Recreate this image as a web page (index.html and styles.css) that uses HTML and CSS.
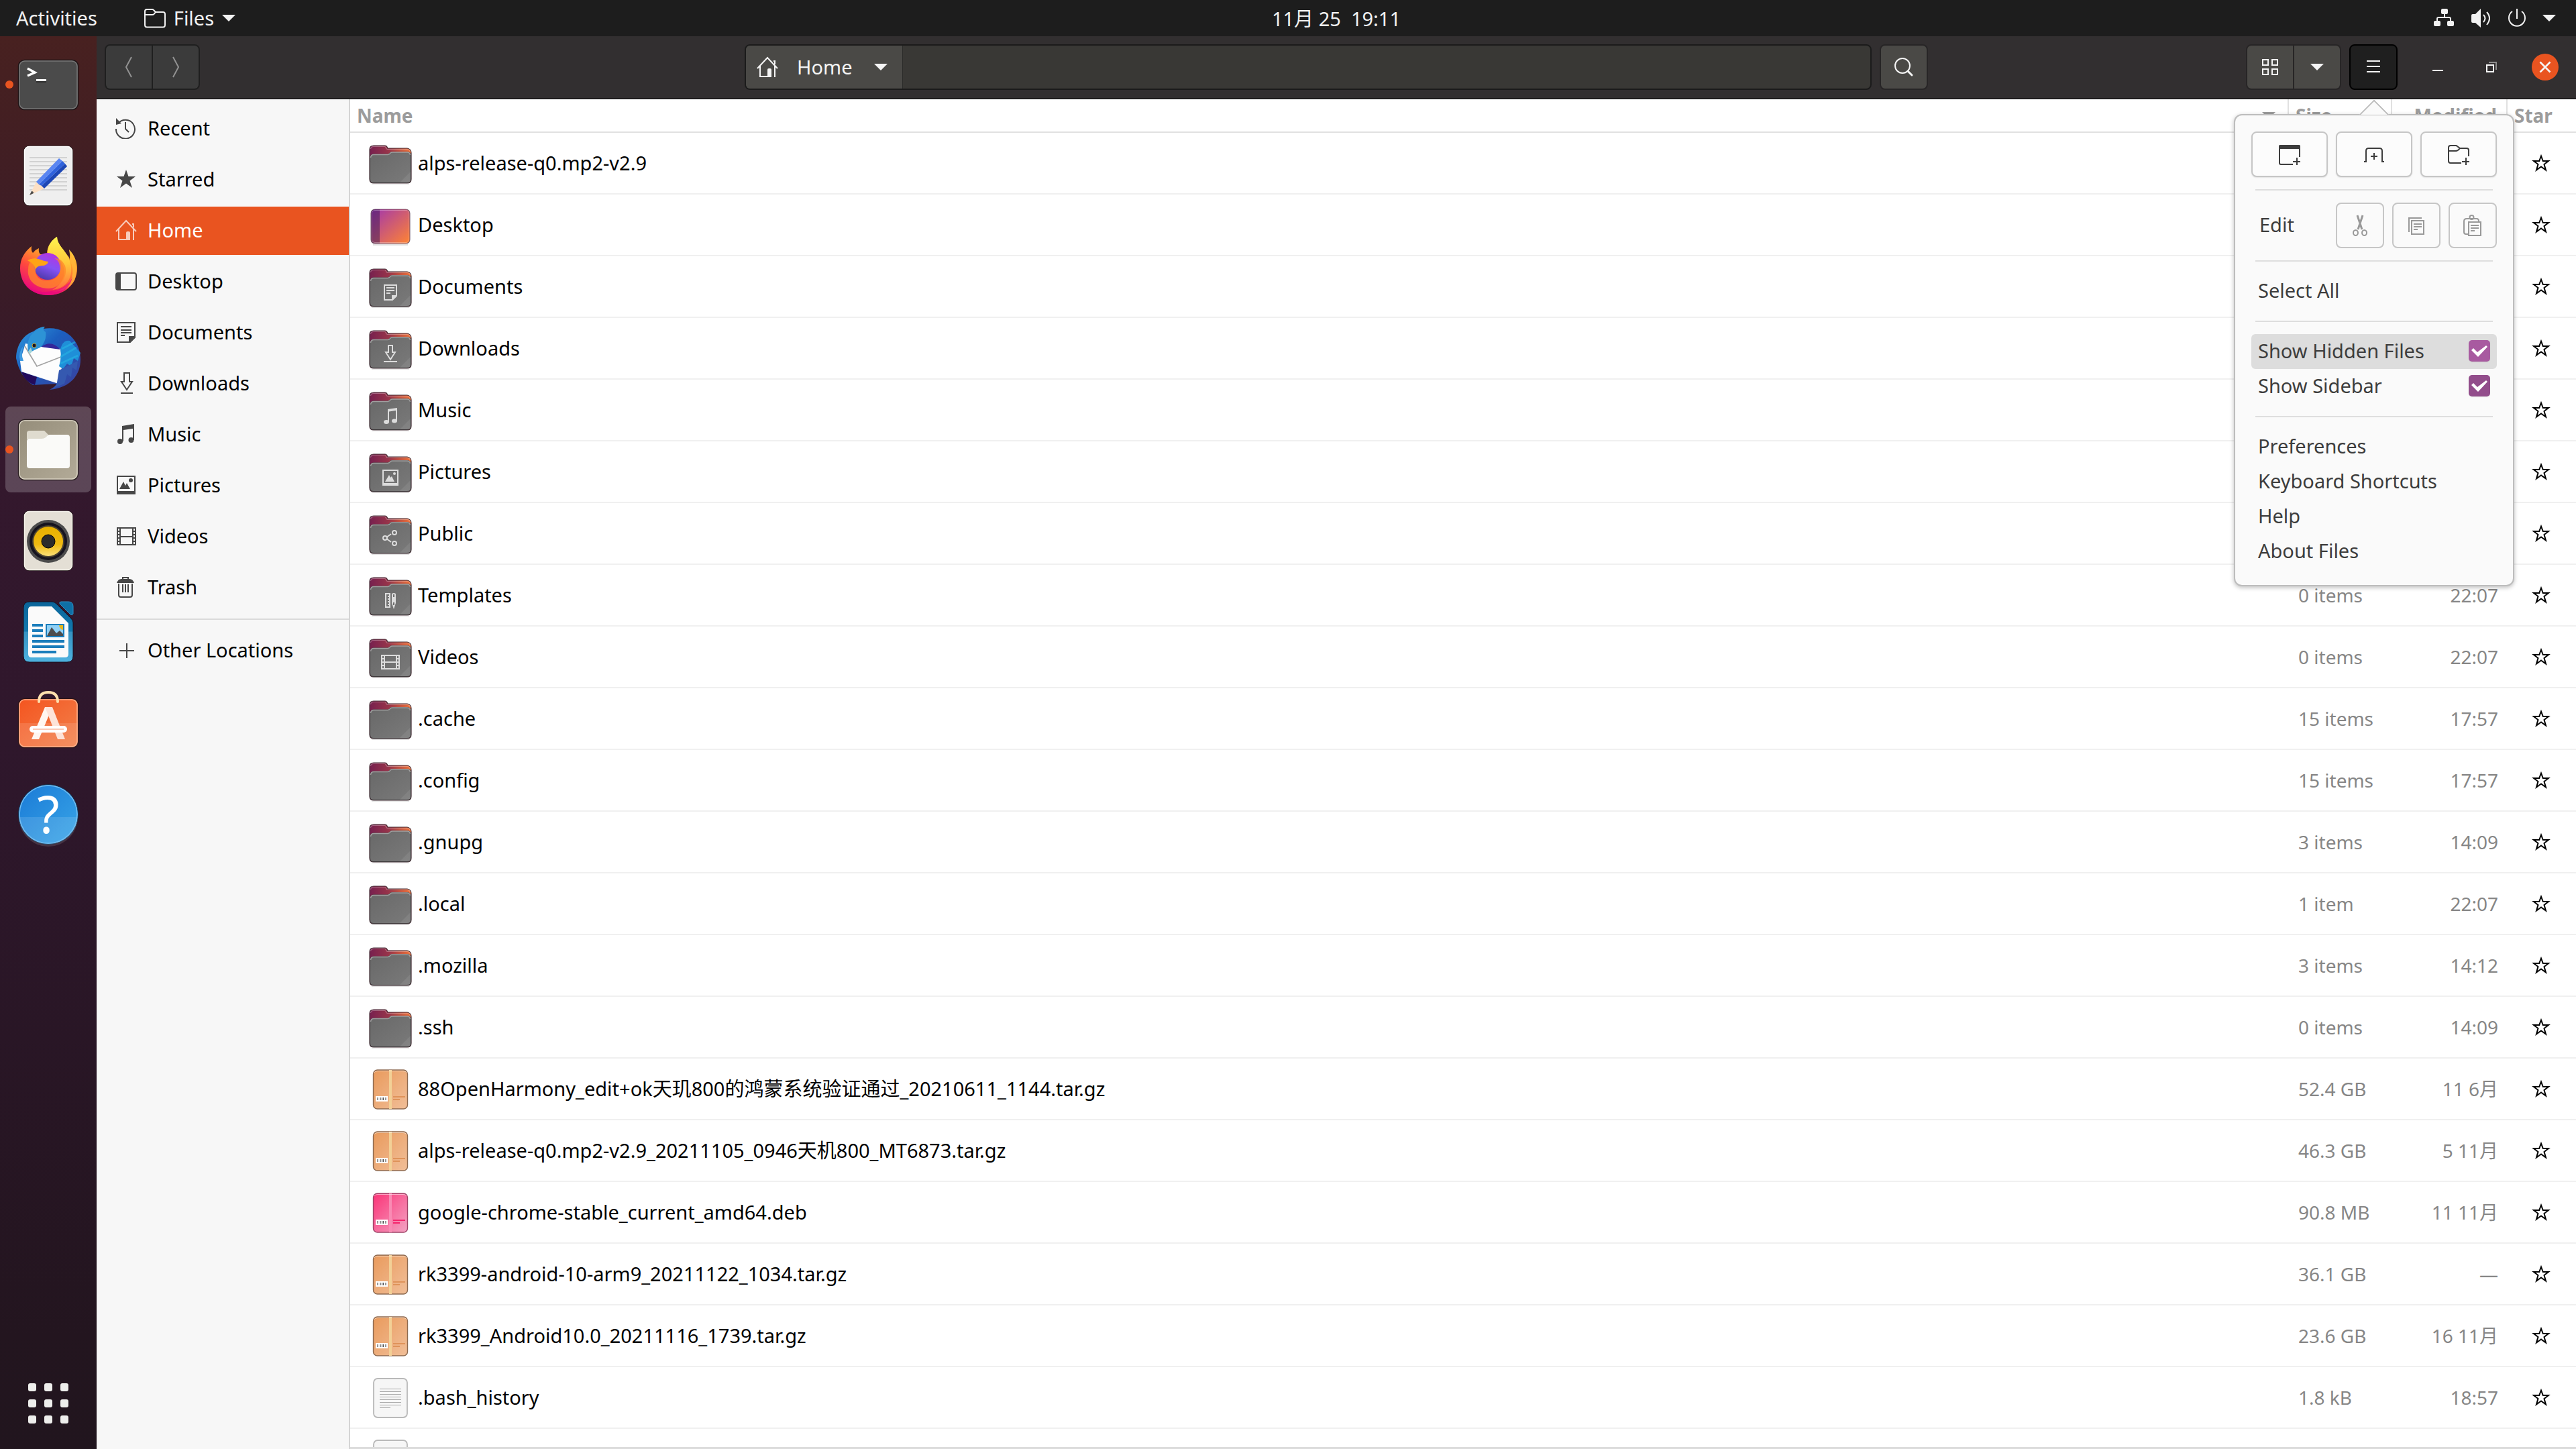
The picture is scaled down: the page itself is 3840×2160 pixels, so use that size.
FILE: index.html
```
<!DOCTYPE html>
<html lang="en">
<head>
    <meta charset="UTF-8">
    <meta name="viewport" content="width=device-width, initial-scale=1.0">
    <title>Home</title>
    <link rel="stylesheet" href="styles.css">
</head>
<body>
    <svg class="sprite" aria-hidden="true">
        <defs>
            <linearGradient id="g-back" x1="0" y1="0" x2="1" y2="0">
                <stop offset="0" stop-color="#77204f"/><stop offset=".45" stop-color="#97344a"/><stop offset="1" stop-color="#f0743a"/>
            </linearGradient>
            <linearGradient id="g-front" x1="0" y1="0" x2="1" y2="1">
                <stop offset="0" stop-color="#686868"/><stop offset="1" stop-color="#7a7a7a"/>
            </linearGradient>
            <linearGradient id="g-desk" x1="0" y1="0" x2="1" y2="1">
                <stop offset="0" stop-color="#a035b0"/><stop offset="1" stop-color="#ff8432"/>
            </linearGradient>
            <linearGradient id="g-pkg" x1="0" y1="0" x2="1" y2="1">
                <stop offset="0" stop-color="#e99a5c"/><stop offset="1" stop-color="#f1bf99"/>
            </linearGradient>
            <linearGradient id="g-deb" x1="0" y1="0" x2="1" y2="1">
                <stop offset="0" stop-color="#fb3377"/><stop offset="1" stop-color="#f3a3c3"/>
            </linearGradient>
            <linearGradient id="g-fox" x1=".8" y1="0" x2=".3" y2="1">
                <stop offset="0" stop-color="#fff44f"/><stop offset=".35" stop-color="#ffa32b"/><stop offset=".65" stop-color="#ff4a3d"/><stop offset="1" stop-color="#e8067f"/>
            </linearGradient>
            <linearGradient id="g-fin" x1="0" y1="0" x2="0" y2="1">
                <stop offset="0" stop-color="#fff44f"/><stop offset=".5" stop-color="#ffc83a"/><stop offset="1" stop-color="#ff6f3d"/>
            </linearGradient>
            <linearGradient id="g-globe" x1=".7" y1="0" x2=".3" y2="1">
                <stop offset="0" stop-color="#b832e0"/><stop offset=".5" stop-color="#8552f5"/><stop offset="1" stop-color="#4b39a8"/>
            </linearGradient>
            <linearGradient id="g-bird" x1="0" y1="0" x2="1" y2="1">
                <stop offset="0" stop-color="#2f9ee0"/><stop offset=".4" stop-color="#1c5fbf"/><stop offset="1" stop-color="#3b3f9c"/>
            </linearGradient>
            <linearGradient id="g-shop" x1="0" y1="0" x2="1" y2="1">
                <stop offset="0" stop-color="#f4541f"/><stop offset="1" stop-color="#f2824c"/>
            </linearGradient>
            <linearGradient id="g-help" x1="0" y1="0" x2="1" y2="1">
                <stop offset="0" stop-color="#1a7ad6"/><stop offset="1" stop-color="#39a6e8"/>
            </linearGradient>
            <linearGradient id="g-nautilus" x1="0" y1="0" x2="1" y2="1">
                <stop offset="0" stop-color="#958d7a"/><stop offset="1" stop-color="#b3ab98"/>
            </linearGradient>
            <linearGradient id="g-cone" x1="0" y1="0" x2="0" y2="1">
                <stop offset="0" stop-color="#e8b000"/><stop offset=".6" stop-color="#efba10"/><stop offset="1" stop-color="#fbe078"/>
            </linearGradient>
            <linearGradient id="g-writer" x1="0" y1="0" x2="0" y2="1">
                <stop offset="0" stop-color="#0a6499"/><stop offset=".49" stop-color="#1279ae"/><stop offset=".5" stop-color="#3592c2"/><stop offset="1" stop-color="#4fb3e0"/>
            </linearGradient>
        </defs>

        <!-- symbolic icons, 16px grid doubled -->
        <symbol id="i-folder" viewBox="0 0 32 32"><path d="M1 26V6Q1 3 4 3H12Q13.500 3 14.500 4.500L17 7H28Q31 7 31 10V26Q31 29.500 28 29.500H4Q1 29.500 1 26ZM1 11H12Q14 11 15 9.500L17 7" fill="none" stroke="currentColor" stroke-width="2"/></symbol>
        <symbol id="i-caret" viewBox="0 0 20 10"><path d="M0 0H20L10 10Z" fill="currentColor"/></symbol>
        <symbol id="i-network" viewBox="0 0 32 32"><path d="M13 2h6q2 0 2 2v4q0 2-2 2h-6q-2 0-2-2V4q0-2 2-2zM2 20h6q2 0 2 2v4q0 2-2 2H2q-2 0-2-2v-4q0-2 2-2zM22 20h6q2 0 2 2v4q0 2-2 2h-6q-2 0-2-2v-4q0-2 2-2z" fill="currentColor"/><path d="M16 9v6M5 21v-4q0-2 2-2h16q2 0 2 2v4" fill="none" stroke="currentColor" stroke-width="2"/></symbol>
        <symbol id="i-volume" viewBox="0 0 32 32"><path d="M4 10h4l8-8v28l-8-7H4q-2 0-2-2v-9q0-2 2-2z" fill="currentColor"/><path d="M20 11q5 5 0 11M25 7q8 9 0 19" fill="none" stroke="currentColor" stroke-width="2"/></symbol>
        <symbol id="i-power" viewBox="0 0 32 32"><path d="M16 2v15M9 6A12 12 0 1 0 23 6" fill="none" stroke="currentColor" stroke-width="2"/></symbol>
        <symbol id="i-prev" viewBox="0 0 32 32"><path d="M20 1L12 16L20 31" fill="none" stroke="currentColor" stroke-width="2"/></symbol>
        <symbol id="i-next" viewBox="0 0 32 32"><path d="M12 1L20 16L12 31" fill="none" stroke="currentColor" stroke-width="2"/></symbol>
        <symbol id="i-home" viewBox="0 0 32 32"><path d="M1 18L16 2L31 18M5 14V30H22M27 14V31M25 7h2v5" fill="none" stroke="currentColor" stroke-width="2"/><path d="M16 31V20q0-2 2-2h2q2 0 2 2v11z" fill="currentColor"/></symbol>
        <symbol id="i-search" viewBox="0 0 32 32"><circle cx="14" cy="14" r="11" fill="none" stroke="currentColor" stroke-width="2"/><path d="M22 22L28 28" stroke="currentColor" stroke-width="3" stroke-linecap="round"/></symbol>
        <symbol id="i-grid" viewBox="0 0 32 32"><path d="M5 5h8v8H5zM19 5h8v8h-8zM5 19h8v8H5zM19 19h8v8h-8z" fill="none" stroke="currentColor" stroke-width="2"/></symbol>
        <symbol id="i-menu" viewBox="0 0 32 32"><path d="M6 7H26M6 15H26M6 23H26" stroke="currentColor" stroke-width="2"/></symbol>
        <symbol id="i-min" viewBox="0 0 32 32"><path d="M8 21H24" stroke="currentColor" stroke-width="2"/></symbol>
        <symbol id="i-max" viewBox="0 0 32 32"><path d="M9 13H19V23H9Z" fill="none" stroke="currentColor" stroke-width="2"/><path d="M12 9H23V20" fill="none" stroke="#8d8c8c" stroke-width="2"/></symbol>
        <symbol id="i-close" viewBox="0 0 32 32"><path d="M8.500 8.500L23.500 23.500M23.500 8.500L8.500 23.500" stroke="currentColor" stroke-width="2.600"/></symbol>
        <symbol id="i-recent" viewBox="0 0 32 32"><path d="M4 9A14 14 0 1 1 1 17" fill="none" stroke="currentColor" stroke-width="2"/><path d="M1 1V11L9 9Z" fill="currentColor"/><path d="M15 7V17L20 22" fill="none" stroke="currentColor" stroke-width="2"/></symbol>
        <symbol id="i-starred" viewBox="0 0 32 32"><path d="M16 2L19.500 12H30L21.500 18.500L25 29L16 22.500L7 29L10.500 18.500L2 12H12.500Z" fill="currentColor"/></symbol>
        <symbol id="i-desktop" viewBox="0 0 32 32"><rect x="1" y="4" width="30" height="25" rx="3" fill="none" stroke="currentColor" stroke-width="2"/><path d="M1 6q0-2 2-2h5v25H3q-2 0-2-2z" fill="currentColor"/></symbol>
        <symbol id="i-documents" viewBox="0 0 32 32"><path d="M3 2H29V24L22 31H3Z" fill="none" stroke="currentColor" stroke-width="2"/><path d="M20 22H30L20 32ZM8 7H24V9H8ZM8 12H24V14H8ZM8 16H24V18H8ZM8 20H14V22H8Z" fill="currentColor"/></symbol>
        <symbol id="i-downloads" viewBox="0 0 32 32"><path d="M13 1H21V14H25L17 26L9 14H13ZM8 31H26" fill="none" stroke="currentColor" stroke-width="2"/></symbol>
        <symbol id="i-music" viewBox="0 0 32 32"><path d="M10 4L28 1V25H26V8L12 10V27H10Z" fill="currentColor"/><ellipse cx="7" cy="27" rx="4" ry="4" fill="currentColor"/><ellipse cx="23.500" cy="25" rx="4" ry="4" fill="currentColor"/></symbol>
        <symbol id="i-pictures" viewBox="0 0 32 32"><path d="M3 3H29V29H3Z" fill="none" stroke="currentColor" stroke-width="2"/><path d="M3 25H29V30H3ZM6 22L12 11L15 17L17 13L22 22Z" fill="currentColor"/><circle cx="23" cy="9" r="3" fill="currentColor"/></symbol>
        <symbol id="i-videos" viewBox="0 0 32 32"><path d="M7 4H26V29H7ZM7 17H26" fill="none" stroke="currentColor" stroke-width="2"/><path d="M3 3V30M30 3V30" fill="none" stroke="currentColor" stroke-width="2"/><path d="M5 3V30M28 3V30" fill="none" stroke="currentColor" stroke-width="4" stroke-dasharray="2 3"/></symbol>
        <symbol id="i-trash" viewBox="0 0 32 32"><path d="M11 5V2H19V5M5 11V28Q5 31 8 31H22Q25 31 25 28V11M11 12V24M15 12V24M19 12V24" fill="none" stroke="currentColor" stroke-width="2"/><path d="M2 10Q4 4 9 4H21Q26 4 28 10Z" fill="currentColor"/></symbol>
        <symbol id="i-plus" viewBox="0 0 32 32"><path d="M17 6V28M6 17H28" stroke="currentColor" stroke-width="2"/></symbol>
        <symbol id="i-star" viewBox="0 0 32 32"><path d="M15 5.500L17.800 13H26L19.500 18L22 26.500L15 21.500L8 26.500L10.500 18L4 13H12.200Z" fill="none" stroke="currentColor" stroke-width="2"/></symbol>
        <symbol id="i-newwin" viewBox="0 0 32 32"><path d="M31 20V5Q31 3 29 3H3Q1 3 1 5V29Q1 31 3 31H21" fill="none" stroke="currentColor" stroke-width="2"/><path d="M0 8V4Q0 2 2 2H30Q32 2 32 4V8ZM26 21h2v5h4v2h-4v4h-2v-4h-5v-2h5z" fill="currentColor"/></symbol>
        <symbol id="i-newtab" viewBox="0 0 32 32"><path d="M1 27H4V11Q4 7 8 7H24Q28 7 28 11V27H31M16 14V24M11 19H21" fill="none" stroke="currentColor" stroke-width="2"/></symbol>
        <symbol id="i-newfolder" viewBox="0 0 32 32"><path d="M31 19V10Q31 7 28 7H18L14 4Q13 3 12 3H4Q1 3 1 6V26Q1 29 4 29H20M1 11H12Q15 11 18 7" fill="none" stroke="currentColor" stroke-width="2"/><path d="M26 21h2v5h4v2h-4v4h-2v-4h-5v-2h5z" fill="currentColor"/></symbol>
        <symbol id="i-cut" viewBox="0 0 32 32"><path d="M12 1L19 22M20 1L13 22" stroke="currentColor" stroke-width="3"/><ellipse cx="9.500" cy="27" rx="3.500" ry="4" fill="none" stroke="currentColor" stroke-width="2"/><ellipse cx="22.500" cy="27" rx="3.500" ry="4" fill="none" stroke="currentColor" stroke-width="2"/></symbol>
        <symbol id="i-copy" viewBox="0 0 32 32"><path d="M5 26V5H24M9 9H27V29H9ZM12 14H24M12 18H24M12 22H18" fill="none" stroke="currentColor" stroke-width="2"/></symbol>
        <symbol id="i-paste" viewBox="0 0 32 32"><path d="M9 29H6Q3 29 3 26V10Q3 6 7 6H22Q25 6 25 10M10 11H28V31H10ZM13 16H25M13 20H25M13 24H19" fill="none" stroke="currentColor" stroke-width="2"/><circle cx="14.500" cy="4" r="3" fill="none" stroke="currentColor" stroke-width="2"/></symbol>

        <!-- file icons -->
        <symbol id="f-folder" viewBox="0 0 64 64">
            <path d="M4 64H60" stroke="#000" stroke-opacity=".12" stroke-width="2"/>
            <path d="M1 12Q1 6 7 6H24Q26 6 27 8L28 10H57Q63 11 63 17V56Q63 62 57 62H7Q1 62 1 56Z" fill="url(#g-back)" stroke="#473038" stroke-width="1.200"/>
            <path d="M2.500 11Q3 7.500 7 7.500H24L27 11.500H57Q61 12 61.500 15" fill="none" stroke="#fff" stroke-opacity=".3" stroke-width="1.200"/>
            <path d="M1.500 25Q1.500 19 7 19H27Q30 19 31 17Q32 15.500 34 15.500H57Q62.500 15.500 62.500 21V56Q62.500 61.500 57 61.500H7Q1.500 61.500 1.500 56Z" fill="url(#g-front)" stroke="#3f3a3c" stroke-width="1"/>
            <path d="M2.500 24Q3 19.500 7 19.500H28Q31 19 32 17Q33 16 35 16H57Q61 16 61.500 20" fill="none" stroke="#a0a0a0" stroke-width="1.600"/>
            <path d="M46 61L62 45V56Q62 61 57 61Z" fill="#fff" fill-opacity=".08"/>
        </symbol>
        <symbol id="e-documents" viewBox="0 0 64 64"><path d="M23 30H41V46L35 52H23Z" fill="none" stroke="#dcdcdc" stroke-width="2"/><path d="M34 45H42L34 53ZM26 33H38V35H26ZM26 37H38V39H26ZM26 41H32V43H26Z" fill="#dcdcdc"/></symbol>
        <symbol id="e-downloads" viewBox="0 0 64 64"><path d="M29 28H35V38H39L32 49L25 38H29ZM22 52H42" fill="none" stroke="#dcdcdc" stroke-width="2"/></symbol>
        <symbol id="e-music" viewBox="0 0 64 64"><path d="M28 31L42 29V49H40V33L30 34.500V50H28Z" fill="#dcdcdc"/><ellipse cx="26" cy="50" rx="4" ry="3" fill="#dcdcdc"/><ellipse cx="38" cy="48.500" rx="4" ry="3" fill="#dcdcdc"/></symbol>
        <symbol id="e-pictures" viewBox="0 0 64 64"><path d="M21 30H43V52H21Z" fill="none" stroke="#dcdcdc" stroke-width="2"/><path d="M21 49H43V52H21ZM24 47L30 37L32 41L34 39L38 47Z" fill="#dcdcdc"/><circle cx="38" cy="35" r="2" fill="#dcdcdc"/></symbol>
        <symbol id="e-public" viewBox="0 0 64 64"><g fill="none" stroke="#dcdcdc" stroke-width="2"><circle cx="24" cy="39" r="3"/><circle cx="38" cy="31" r="3"/><circle cx="38" cy="47" r="3"/><path d="M26 38L33 33M26 40L33 45"/></g></symbol>
        <symbol id="e-templates" viewBox="0 0 64 64"><path d="M25 30H31V50H25ZM28 34H31M28 38H31M28 42H31M28 46H31" fill="none" stroke="#dcdcdc" stroke-width="2"/><path d="M34 31Q34 29 37 29Q40 29 40 31V44L37 53L34 44Z" fill="#dcdcdc"/><path d="M36 31h2v4h-2zM36 43h2v4h-2z" fill="#6e6e6e"/></symbol>
        <symbol id="e-videos" viewBox="0 0 64 64"><path d="M23 30H41V50H23ZM23 40H41M19 29V51M45 29V51" fill="none" stroke="#dcdcdc" stroke-width="2"/><path d="M21 29V51M43 29V51" fill="none" stroke="#dcdcdc" stroke-width="4" stroke-dasharray="2 3"/></symbol>
        <symbol id="f-desktop" viewBox="0 0 64 64">
            <path d="M6 62H58" stroke="#000" stroke-opacity=".12" stroke-width="2"/>
            <rect x="3" y="9" width="58" height="51" rx="6" fill="url(#g-desk)"/>
            <path d="M3 15Q3 9 9 9H16V60H9Q3 60 3 54Z" fill="#2a1650" fill-opacity=".45"/>
            <rect x="4" y="10.500" width="56" height="48" rx="5" fill="none" stroke="#fff" stroke-opacity=".3"/>
            <rect x="3" y="9" width="58" height="51" rx="6" fill="none" stroke="#5a3a50" stroke-opacity=".7" stroke-width="1.200"/>
        </symbol>
        <symbol id="f-tar" viewBox="0 0 64 64">
            <rect x="6.500" y="4" width="51" height="58" rx="6" fill="url(#g-pkg)" stroke="#8d6a50" stroke-width="1.400"/>
            <path d="M30 4h4v58h-4z" fill="#f2d096"/>
            <path d="M8 8Q9 5.500 13 5.500H51Q55 5.500 56 8" fill="none" stroke="#fff" stroke-opacity=".5"/>
            <path d="M10 43h18v8H10z" fill="#fff"/><path d="M13 45v4M17 45v4M19.500 45v4M21.500 45v4M25 45v4" stroke="#555" stroke-width="1.200"/>
            <path d="M36 44H54M36 48H46" stroke="#df935a" stroke-width="2"/>
        </symbol>
        <symbol id="f-deb" viewBox="0 0 64 64">
            <rect x="6.500" y="4" width="51" height="58" rx="6" fill="url(#g-deb)" stroke="#a04468" stroke-width="1.400"/>
            <path d="M30 4h4v58h-4z" fill="#f98bb4"/>
            <path d="M8 8Q9 5.500 13 5.500H51Q55 5.500 56 8" fill="none" stroke="#fff" stroke-opacity=".5"/>
            <path d="M10 43h18v8H10z" fill="#fff"/><path d="M13 45v4M17 45v4M19.500 45v4M21.500 45v4M25 45v4" stroke="#555" stroke-width="1.200"/>
            <path d="M36 44H54M36 48H46" stroke="#f5246c" stroke-width="2"/>
        </symbol>
        <symbol id="f-text" viewBox="0 0 64 64">
            <rect x="7" y="4" width="50" height="58" rx="6" fill="#f6f6f6" stroke="#b9b9b9" stroke-width="1.800"/>
            <path d="M16 19.500H48M16 23.500H48M16 27.500H48M16 31.500H48M16 35.500H48M16 39.500H48M16 43.500H48M16 47.500H32" stroke="#a9a9a9" stroke-width="1"/>
        </symbol>
    </svg>

    <header class="topbar">
        <div class="topbar-left">
            <button class="topbar-btn">Activities</button>
            <button class="topbar-btn app-menu">
                <svg class="icon"><use href="#i-folder"/></svg>
                Files
                <svg class="caret"><use href="#i-caret"/></svg>
            </button>
        </div>
        <button class="topbar-btn clock">11月 25&nbsp; 19:11</button>
        <button class="topbar-btn status" aria-label="System">
            <svg class="icon"><use href="#i-network"/></svg>
            <svg class="icon"><use href="#i-volume"/></svg>
            <svg class="icon"><use href="#i-power"/></svg>
            <svg class="caret"><use href="#i-caret"/></svg>
        </button>
    </header>

    <div class="desktop">
        <nav class="dock">
            <a class="dock-item running" href="#" aria-label="Terminal">
                <svg class="app-icon" viewBox="0 0 96 96">
                    <rect x="3.500" y="11.500" width="89" height="74" rx="9" fill="#4b4b4b" stroke="#1f1416" stroke-width="1.500"/>
                    <rect x="5" y="13" width="86" height="71" rx="8" fill="none" stroke="#777" stroke-width="1.500"/>
                    <path d="M17 24L28 30L17 35" fill="none" stroke="#fff" stroke-width="3.500"/>
                    <path d="M30 43.500H45" stroke="#2c2c2c" stroke-width="3"/><path d="M30 41.500H45" stroke="#fff" stroke-width="3"/>
                </svg>
            </a>
            <a class="dock-item" href="#" aria-label="Text Editor">
                <svg class="app-icon" viewBox="0 0 96 96">
                    <rect x="11.500" y="3.500" width="73" height="89" rx="8" fill="#efefef" stroke="#1f1416" stroke-width="1.200"/>
                    <rect x="12.500" y="4.500" width="71" height="87" rx="7" fill="none" stroke="#fff" stroke-width="1.500"/>
                    <path d="M20 21H76M20 27H76M20 33H76M20 39H76M20 45H76M20 51H76M20 57H76M20 63H76M20 69H76" stroke="#d2d2d2" stroke-width="2"/>
                    <path d="M30 57L20 77L42 67L40 60Z" fill="#fde0c4"/><path d="M23 71L20 77L26 74Q26 71 23 71Z" fill="#4a4a4a"/>
                    <path d="M30 57L64 22L69 26L34 61Z" fill="#5a86f2"/><path d="M34 61L69 26L73 30L38 63Z" fill="#2f62dd"/><path d="M38 63L73 30L76 34L42 67Z" fill="#1d47b5"/>
                </svg>
            </a>
            <a class="dock-item" href="#" aria-label="Firefox">
                <svg class="app-icon" viewBox="0 0 96 96">
                    <path d="M6 50C6 36 12 26 23 17Q22 24 25 27Q29 22 34 20Q33 26 36 29H46C46 16 54 7 61 3C61 14 70 20 76 30Q80 34 80 38Q81 30 79 22C88 31 91 42 91 50C91 74 72 90 48 90S6 74 6 50Z" fill="url(#g-fox)"/>
                    <path d="M47 29C46 16 54 7 61 3C61 14 72 22 78 34C88 56 80 80 54 82C66 76 76 62 70 46C66 36 60 31 47 29Z" fill="url(#g-fin)"/>
                    <path d="M80 38Q87 50 83 64Q76 82 54 85Q78 84 87 68Q93 52 86 38Q83 29 79 22Q82 30 80 38Z" fill="#ffb53a" fill-opacity=".8"/>
                    <circle cx="47" cy="47" r="20" fill="url(#g-globe)"/>
                    <path d="M17 38Q26 33 36 37Q43 40 48 40Q46 46 38 46Q30 46 29 52C28 60 34 68 44 68C60 69 68 58 65 46Q64 38 57 35Q68 35 73 46C78 62 66 80 48 80C28 80 16 66 18 52Q18 44 21 41Z" fill="#ff8a2a" fill-opacity=".75"/>
                    <path d="M17 38Q26 33 36 37Q43 40 48 40Q46 46 38 46Q32 46 29 51Q27 43 17 38Z" fill="#ffa416"/>
                    <path d="M8 62C14 82 34 88 52 84C72 82 82 70 84 62C82 78 68 90 48 90C26 90 12 78 8 62Z" fill="#e8067f" fill-opacity=".75"/>
                </svg>
            </a>
            <a class="dock-item" href="#" aria-label="Thunderbird">
                <svg class="app-icon" viewBox="0 0 96 96">
                    <path d="M0 48C0 28 12 12 26 8Q32 2 43 1Q40 3 41 4C72 -1 96 20 96 50C96 72 82 92 50 95Q58 92 61 86L25 88Q6 76 0 48Z" fill="url(#g-bird)"/>
                    <path d="M8 68L31 76L28 88Q12 82 8 68Z" fill="#230a5a"/>
                    <path d="M14 26L6 52L8 68L63 86Q72 60 66 34L38 31Z" fill="#fdfdfd"/>
                    <path d="M13 30L31 60L67 46" fill="none" stroke="#a3a3a3" stroke-width="1.800"/>
                    <path d="M38 31Q52 20 66 35L44 32Z" fill="#35279a"/>
                    <path d="M18 38Q14 18 28 8Q36 1 43 1Q38 6 44 9Q46 22 36 32Q26 36 20 40Z" fill="#2d93d6"/>
                    <path d="M18 38L22 32L24 38L20 42Z" fill="#a6d5d8"/>
                    <path d="M66 34Q70 20 80 22L96 40L92 52L86 48L82 60L76 56L70 64L64 60Q68 48 66 34Z" fill="#1f8fd8"/>
                    <path d="M68 34L88 24M66 46L90 32M66 56L92 44" stroke="#27b4e4" stroke-width="3" stroke-opacity=".6"/>
                    <path d="M64 66L92 52L90 66L84 62L82 76L76 72L72 86L50 95Q60 90 61 84Z" fill="#3559b0"/>
                    <path d="M6 52Q2 40 12 28Q6 40 11 52Z" fill="#3f9be0"/>
                    <circle cx="27" cy="29" r="3" fill="#14142a" stroke="#c59a20" stroke-width="1"/>
                </svg>
            </a>
            <a class="dock-item running active" href="#" aria-label="Files">
                <svg class="app-icon" viewBox="0 0 96 96">
                    <rect x="3.500" y="3.500" width="89" height="90" rx="9" fill="url(#g-nautilus)" stroke="#2b2023" stroke-width="1.500"/>
                    <rect x="5" y="5" width="86" height="87" rx="8" fill="none" stroke="#d6d0c0" stroke-width="1.500"/>
                    <path d="M16 30V24Q16 20 20 20H42L48 26L42 33H16Z" fill="#dfdbcf"/>
                    <path d="M16 36Q16 32 20 32H38Q42 32 44 30L47 27Q48 26 50 26H76Q80 26 80 30V72Q80 76 76 76H20Q16 76 16 72Z" fill="#fafaf8"/>
                </svg>
            </a>
            <a class="dock-item" href="#" aria-label="Rhythmbox">
                <svg class="app-icon" viewBox="0 0 96 96">
                    <rect x="11.500" y="3.500" width="73" height="89" rx="8" fill="#e4dfd5" stroke="#1f1416" stroke-width="1.200"/>
                    <rect x="12.500" y="4.500" width="71" height="87" rx="7" fill="none" stroke="#f4f1ea" stroke-width="1.500"/>
                    <circle cx="48" cy="49" r="32" fill="#4c4c4c"/><circle cx="48" cy="49" r="28" fill="#16141f"/><circle cx="48" cy="49" r="24" fill="#4a4232"/>
                    <circle cx="48" cy="49" r="22" fill="url(#g-cone)"/><circle cx="48" cy="49" r="10" fill="#2b2b2b" stroke="#000" stroke-width="1"/>
                </svg>
            </a>
            <a class="dock-item" href="#" aria-label="LibreOffice Writer">
                <svg class="app-icon" viewBox="0 0 96 96">
                    <path d="M11 12Q11 3 20 3H54Q57 3 60 6L82 28Q85 31 85 34V84Q85 93 76 93H20Q11 93 11 84Z" fill="url(#g-writer)" stroke="#161020" stroke-width="1"/>
                    <path d="M65 6Q64 3 67 3H78Q85 3 85 10V21Q84 24 81 22Z" fill="#0f6fa5" stroke="#2d8fc4" stroke-width="1"/>
                    <path d="M18 15Q18 10 23 10H53L78 35V81Q78 86 73 86H23Q18 86 18 81Z" fill="#fafafa"/>
                    <path d="M24 38H40M24 46H40M24 54H40M24 62H72M24 70H72M24 78H60" stroke="#1a7dbb" stroke-width="4"/>
                    <path d="M45 37H71V55H45Z" fill="#8fd0f5" stroke="#1a7dbb" stroke-width="2"/>
                    <path d="M46 54L53 41L60 50L65 46L70 51V54Z" fill="#4d4d4d"/><path d="M64 38H70V45Q65 44 64 38Z" fill="#eab81c"/>
                </svg>
            </a>
            <a class="dock-item" href="#" aria-label="Ubuntu Software">
                <svg class="app-icon" viewBox="0 0 96 96">
                    <rect x="3.500" y="11.500" width="89" height="73" rx="9" fill="url(#g-shop)" stroke="#2b1418" stroke-width="1.500"/>
                    <path d="M4 48H92V76Q92 84 84 84H12Q4 84 4 76Z" fill="#fff" fill-opacity=".12"/>
                    <rect x="5" y="13" width="86" height="70" rx="8" fill="none" stroke="#ffb08a" stroke-width="1.500"/>
                    <path d="M34 16Q34 2 48 2T62 16" fill="none" stroke="#fde0ae" stroke-width="4" stroke-linecap="round"/>
                    <path d="M43 24H54L34 72H23Z" fill="#fff6f0"/><path d="M43 24H54L73 72H62Z" fill="#fde3d8"/>
                    <rect x="20" y="52" width="56" height="10" rx="5" fill="#fff"/><path d="M25 57H71" stroke="#fbc9b6" stroke-width="2"/>
                </svg>
            </a>
            <a class="dock-item" href="#" aria-label="Help">
                <svg class="app-icon" viewBox="0 0 96 96">
                    <circle cx="48" cy="48" r="44.500" fill="url(#g-help)" stroke="#14304a" stroke-width="1"/>
                    <path d="M4 52H92A44 44 0 0 1 4 52Z" fill="#fff" fill-opacity=".12"/>
                    <circle cx="48" cy="48" r="43" fill="none" stroke="#74bdf0" stroke-width="1.500"/>
                    <text x="48" y="76" class="help-mark">?</text>
                </svg>
            </a>
            <button class="dock-item apps" aria-label="Show Applications">
                <svg class="app-icon" viewBox="0 0 96 96" fill="#eeeeec">
                    <rect x="18" y="18" width="12" height="12" rx="3"/><rect x="42" y="18" width="12" height="12" rx="3"/><rect x="66" y="18" width="12" height="12" rx="3"/>
                    <rect x="18" y="42" width="12" height="12" rx="3"/><rect x="42" y="42" width="12" height="12" rx="3"/><rect x="66" y="42" width="12" height="12" rx="3"/>
                    <rect x="18" y="66" width="12" height="12" rx="3"/><rect x="42" y="66" width="12" height="12" rx="3"/><rect x="66" y="66" width="12" height="12" rx="3"/>
                </svg>
            </button>
        </nav>

        <div class="window">
            <div class="headerbar">
                <div class="header-start">
                    <div class="linked nav-buttons">
                        <button aria-label="Back" disabled><svg class="icon"><use href="#i-prev"/></svg></button>
                        <button aria-label="Forward" disabled><svg class="icon"><use href="#i-next"/></svg></button>
                    </div>
                </div>
                <div class="header-center">
                    <div class="pathbar">
                        <button class="path-current">
                            <svg class="icon"><use href="#i-home"/></svg>
                            <span>Home</span>
                            <svg class="caret"><use href="#i-caret"/></svg>
                        </button>
                    </div>
                    <button class="tool-btn" aria-label="Search"><svg class="icon"><use href="#i-search"/></svg></button>
                </div>
                <div class="header-end">
                    <div class="linked">
                        <button aria-label="Grid view"><svg class="icon"><use href="#i-grid"/></svg></button>
                        <button aria-label="View options"><svg class="caret"><use href="#i-caret"/></svg></button>
                    </div>
                    <div class="menu-anchor">
                        <button class="tool-btn pressed" aria-label="Menu" aria-expanded="true"><svg class="icon"><use href="#i-menu"/></svg></button>
                        <div class="popover">
                            <div class="popover-row">
                                <button class="wide" aria-label="New Window"><svg class="icon"><use href="#i-newwin"/></svg></button>
                                <button class="wide" aria-label="New Tab"><svg class="icon"><use href="#i-newtab"/></svg></button>
                                <button class="wide" aria-label="New Folder"><svg class="icon"><use href="#i-newfolder"/></svg></button>
                            </div>
                            <hr>
                            <div class="popover-row">
                                <span class="row-label">Edit</span>
                                <button aria-label="Cut" disabled><svg class="icon"><use href="#i-cut"/></svg></button>
                                <button aria-label="Copy" disabled><svg class="icon"><use href="#i-copy"/></svg></button>
                                <button aria-label="Paste" disabled><svg class="icon"><use href="#i-paste"/></svg></button>
                            </div>
                            <hr>
                            <button class="menu-item">Select All</button>
                            <hr>
                            <label class="menu-item hover">Show Hidden Files <input type="checkbox" checked></label>
                            <label class="menu-item">Show Sidebar <input type="checkbox" checked></label>
                            <hr>
                            <button class="menu-item">Preferences</button>
                            <button class="menu-item">Keyboard Shortcuts</button>
                            <button class="menu-item">Help</button>
                            <button class="menu-item">About Files</button>
                        </div>
                    </div>
                    <div class="window-controls">
                        <button aria-label="Minimize"><svg class="icon"><use href="#i-min"/></svg></button>
                        <button aria-label="Restore"><svg class="icon"><use href="#i-max"/></svg></button>
                        <button class="close" aria-label="Close"><svg class="icon"><use href="#i-close"/></svg></button>
                    </div>
                </div>
            </div>

            <div class="content">
                <aside class="sidebar">
                    <a href="#"><svg class="icon"><use href="#i-recent"/></svg>Recent</a>
                    <a href="#"><svg class="icon"><use href="#i-starred"/></svg>Starred</a>
                    <a href="#" class="selected"><svg class="icon"><use href="#i-home"/></svg>Home</a>
                    <a href="#"><svg class="icon"><use href="#i-desktop"/></svg>Desktop</a>
                    <a href="#"><svg class="icon"><use href="#i-documents"/></svg>Documents</a>
                    <a href="#"><svg class="icon"><use href="#i-downloads"/></svg>Downloads</a>
                    <a href="#"><svg class="icon"><use href="#i-music"/></svg>Music</a>
                    <a href="#"><svg class="icon"><use href="#i-pictures"/></svg>Pictures</a>
                    <a href="#"><svg class="icon"><use href="#i-videos"/></svg>Videos</a>
                    <a href="#"><svg class="icon"><use href="#i-trash"/></svg>Trash</a>
                    <hr>
                    <a href="#"><svg class="icon"><use href="#i-plus"/></svg>Other Locations</a>
                </aside>

                <main class="files">
                    <table>
                        <thead>
                            <tr>
                                <th class="col-name"><div class="th-name">Name <svg class="caret"><use href="#i-caret"/></svg></div></th>
                                <th class="col-size">Size</th>
                                <th class="col-modified">Modified</th>
                                <th class="col-star">Star</th>
                            </tr>
                        </thead>
                        <tbody>
                            <tr><td><div class="file"><svg class="file-icon"><use href="#f-folder"/></svg>alps-release-q0.mp2-v2.9</div></td><td class="size"></td><td class="modified"></td><td class="star"><button aria-label="Star"><svg class="icon"><use href="#i-star"/></svg></button></td></tr>
                            <tr><td><div class="file"><svg class="file-icon"><use href="#f-desktop"/></svg>Desktop</div></td><td class="size"></td><td class="modified"></td><td class="star"><button aria-label="Star"><svg class="icon"><use href="#i-star"/></svg></button></td></tr>
                            <tr><td><div class="file"><svg class="file-icon"><use href="#f-folder"/><use href="#e-documents"/></svg>Documents</div></td><td class="size"></td><td class="modified"></td><td class="star"><button aria-label="Star"><svg class="icon"><use href="#i-star"/></svg></button></td></tr>
                            <tr><td><div class="file"><svg class="file-icon"><use href="#f-folder"/><use href="#e-downloads"/></svg>Downloads</div></td><td class="size"></td><td class="modified"></td><td class="star"><button aria-label="Star"><svg class="icon"><use href="#i-star"/></svg></button></td></tr>
                            <tr><td><div class="file"><svg class="file-icon"><use href="#f-folder"/><use href="#e-music"/></svg>Music</div></td><td class="size"></td><td class="modified"></td><td class="star"><button aria-label="Star"><svg class="icon"><use href="#i-star"/></svg></button></td></tr>
                            <tr><td><div class="file"><svg class="file-icon"><use href="#f-folder"/><use href="#e-pictures"/></svg>Pictures</div></td><td class="size"></td><td class="modified"></td><td class="star"><button aria-label="Star"><svg class="icon"><use href="#i-star"/></svg></button></td></tr>
                            <tr><td><div class="file"><svg class="file-icon"><use href="#f-folder"/><use href="#e-public"/></svg>Public</div></td><td class="size"></td><td class="modified"></td><td class="star"><button aria-label="Star"><svg class="icon"><use href="#i-star"/></svg></button></td></tr>
                            <tr><td><div class="file"><svg class="file-icon"><use href="#f-folder"/><use href="#e-templates"/></svg>Templates</div></td><td class="size">0 items</td><td class="modified">22:07</td><td class="star"><button aria-label="Star"><svg class="icon"><use href="#i-star"/></svg></button></td></tr>
                            <tr><td><div class="file"><svg class="file-icon"><use href="#f-folder"/><use href="#e-videos"/></svg>Videos</div></td><td class="size">0 items</td><td class="modified">22:07</td><td class="star"><button aria-label="Star"><svg class="icon"><use href="#i-star"/></svg></button></td></tr>
                            <tr><td><div class="file"><svg class="file-icon"><use href="#f-folder"/></svg>.cache</div></td><td class="size">15 items</td><td class="modified">17:57</td><td class="star"><button aria-label="Star"><svg class="icon"><use href="#i-star"/></svg></button></td></tr>
                            <tr><td><div class="file"><svg class="file-icon"><use href="#f-folder"/></svg>.config</div></td><td class="size">15 items</td><td class="modified">17:57</td><td class="star"><button aria-label="Star"><svg class="icon"><use href="#i-star"/></svg></button></td></tr>
                            <tr><td><div class="file"><svg class="file-icon"><use href="#f-folder"/></svg>.gnupg</div></td><td class="size">3 items</td><td class="modified">14:09</td><td class="star"><button aria-label="Star"><svg class="icon"><use href="#i-star"/></svg></button></td></tr>
                            <tr><td><div class="file"><svg class="file-icon"><use href="#f-folder"/></svg>.local</div></td><td class="size">1 item</td><td class="modified">22:07</td><td class="star"><button aria-label="Star"><svg class="icon"><use href="#i-star"/></svg></button></td></tr>
                            <tr><td><div class="file"><svg class="file-icon"><use href="#f-folder"/></svg>.mozilla</div></td><td class="size">3 items</td><td class="modified">14:12</td><td class="star"><button aria-label="Star"><svg class="icon"><use href="#i-star"/></svg></button></td></tr>
                            <tr><td><div class="file"><svg class="file-icon"><use href="#f-folder"/></svg>.ssh</div></td><td class="size">0 items</td><td class="modified">14:09</td><td class="star"><button aria-label="Star"><svg class="icon"><use href="#i-star"/></svg></button></td></tr>
                            <tr><td><div class="file"><svg class="file-icon"><use href="#f-tar"/></svg>88OpenHarmony_edit+ok天玑800的鸿蒙系统验证通过_20210611_1144.tar.gz</div></td><td class="size">52.4 GB</td><td class="modified">11 6月</td><td class="star"><button aria-label="Star"><svg class="icon"><use href="#i-star"/></svg></button></td></tr>
                            <tr><td><div class="file"><svg class="file-icon"><use href="#f-tar"/></svg>alps-release-q0.mp2-v2.9_20211105_0946天机800_MT6873.tar.gz</div></td><td class="size">46.3 GB</td><td class="modified">5 11月</td><td class="star"><button aria-label="Star"><svg class="icon"><use href="#i-star"/></svg></button></td></tr>
                            <tr><td><div class="file"><svg class="file-icon"><use href="#f-deb"/></svg>google-chrome-stable_current_amd64.deb</div></td><td class="size">90.8 MB</td><td class="modified">11 11月</td><td class="star"><button aria-label="Star"><svg class="icon"><use href="#i-star"/></svg></button></td></tr>
                            <tr><td><div class="file"><svg class="file-icon"><use href="#f-tar"/></svg>rk3399-android-10-arm9_20211122_1034.tar.gz</div></td><td class="size">36.1 GB</td><td class="modified">—</td><td class="star"><button aria-label="Star"><svg class="icon"><use href="#i-star"/></svg></button></td></tr>
                            <tr><td><div class="file"><svg class="file-icon"><use href="#f-tar"/></svg>rk3399_Android10.0_20211116_1739.tar.gz</div></td><td class="size">23.6 GB</td><td class="modified">16 11月</td><td class="star"><button aria-label="Star"><svg class="icon"><use href="#i-star"/></svg></button></td></tr>
                            <tr><td><div class="file"><svg class="file-icon"><use href="#f-text"/></svg>.bash_history</div></td><td class="size">1.8 kB</td><td class="modified">18:57</td><td class="star"><button aria-label="Star"><svg class="icon"><use href="#i-star"/></svg></button></td></tr>
                            <tr><td><div class="file"><svg class="file-icon"><use href="#f-text"/></svg></div></td><td class="size"></td><td class="modified"></td><td class="star"></td></tr>
                        </tbody>
                    </table>
                </main>
            </div>
        </div>
    </div>
</body>
</html>
```
FILE: styles.css
```
* {
    box-sizing: border-box;
}
body {
    margin: 0;
    height: 100vh;
    display: flex;
    flex-direction: column;
    overflow: hidden;
    font-family: "Noto Sans", "Noto Sans CJK SC", sans-serif;
    font-size: 29px;
    line-height: 40px;
    color: #000;
    background: #1d1d1d;
}
button {
    margin: 0;
    padding: 0;
    border: none;
    background: none;
    font: inherit;
    color: inherit;
    display: flex;
    align-items: center;
    justify-content: center;
}
a {
    color: inherit;
    text-decoration: none;
}
.sprite {
    position: absolute;
    width: 0;
    height: 0;
}
.icon {
    width: 32px;
    height: 32px;
    flex: none;
}
.caret {
    width: 20px;
    height: 10px;
    flex: none;
}

/* top panel */
.topbar {
    display: grid;
    grid-template-columns: 144px minmax(0, 1fr) auto minmax(0, 1fr);
    align-items: center;
    height: 54px;
    flex: none;
    color: #f2f2f2;
    background: #1d1d1d;
}
.topbar-left {
    grid-column: 1 / 3;
    display: flex;
    gap: 70px;
    padding-left: 24px;
}
.app-menu {
    gap: 12px;
}
.clock {
    padding-top: 2px;
}
.status {
    justify-self: end;
    gap: 22px;
    padding-right: 30px;
}

.desktop {
    display: flex;
    flex: 1;
    min-height: 0;
}

/* dock */
.dock {
    width: 144px;
    flex: none;
    display: flex;
    flex-direction: column;
    align-items: center;
    gap: 8px;
    padding: 8px 0 4px;
    background: linear-gradient(#482120, #3a1b27 18%, #34182d 30%, #2f172c 50%, #23151f 92%, #21151e);
}
.dock-item {
    position: relative;
    width: 128px;
    height: 128px;
    flex: none;
    display: flex;
    align-items: center;
    justify-content: center;
    border-radius: 8px;
}
.dock-item.active {
    background: rgba(255, 255, 255, 0.2);
}
.dock-item.running::before {
    content: "";
    position: absolute;
    left: 0;
    width: 12px;
    height: 12px;
    border-radius: 50%;
    background: #e95420;
}
.apps {
    margin-top: auto;
}
.app-icon {
    width: 96px;
    height: 96px;
    overflow: visible;
}
.help-mark {
    font-size: 76px;
    fill: #fff;
    text-anchor: middle;
}

/* window */
.window {
    flex: 1;
    min-width: 0;
    display: flex;
    flex-direction: column;
}
.headerbar {
    display: grid;
    grid-template-columns: 1fr minmax(0, 1764px) 1fr;
    align-items: center;
    height: 94px;
    flex: none;
    color: #f5f5f5;
    background: #322f30;
    border-bottom: 2px solid #1e1c1d;
}
.header-start {
    display: flex;
    padding-left: 12px;
}
.header-center {
    display: flex;
    gap: 12px;
}
.header-end {
    display: flex;
    align-items: center;
    justify-content: flex-end;
    gap: 12px;
    padding-right: 26px;
}
.linked {
    display: flex;
    gap: 2px;
    height: 68px;
    border: 2px solid #272526;
    border-radius: 8px;
    background: #272526;
    overflow: hidden;
}
.linked button {
    width: 68px;
    background: #4a4946;
}
.nav-buttons {
    border-color: #1f1f1f;
    background: #1f1f1f;
}
.nav-buttons button {
    color: #929292;
    background: #3b3b3b;
}
.pathbar {
    flex: 1;
    display: flex;
    height: 68px;
    border: 2px solid #1b1b1b;
    border-radius: 8px;
    background: #393835;
    overflow: hidden;
}
.path-current {
    gap: 28px;
    padding: 0 22px 0 16px;
    background: #4a4946;
    border-right: 1px solid #2b2b29;
}
.path-current .caret {
    margin-left: 4px;
}
.tool-btn {
    width: 72px;
    height: 68px;
    border: 2px solid #272526;
    border-radius: 8px;
    background: #4a4946;
}
.tool-btn.pressed {
    border-color: #000;
    background: #1f1f1f;
}
.window-controls {
    display: flex;
    gap: 40px;
    margin-left: 28px;
}
.window-controls button {
    width: 40px;
    height: 40px;
    border-radius: 50%;
}
.window-controls .close {
    background: #e95420;
}

/* menu popover */
.menu-anchor {
    position: relative;
}
.popover {
    position: absolute;
    z-index: 2;
    top: 104px;
    right: -174px;
    width: 418px;
    padding: 24px;
    color: #3d3d3d;
    background: #fafafa;
    border: 2px solid #bdbdbd;
    border-radius: 12px;
    box-shadow: 0 2px 6px rgba(0, 0, 0, 0.25);
}
.popover::before {
    content: "";
    position: absolute;
    top: -17px;
    left: 191px;
    width: 30px;
    height: 30px;
    border: 2px solid #bdbdbd;
    border-right: none;
    border-bottom: none;
    background: #fafafa;
    transform: rotate(45deg);
    clip-path: polygon(0 0, 100% 0, 0 100%);
}
.popover hr {
    margin: 18px 6px;
    border: none;
    border-top: 2px solid #dedede;
}
.popover-row {
    display: flex;
    gap: 12px;
}
.popover-row button {
    width: 72px;
    height: 68px;
    border: 2px solid #c6c6c6;
    border-radius: 8px;
    background: #fcfcfc;
}
.popover-row button:disabled {
    color: #999;
    background: #fafafa;
}
.popover-row .wide {
    flex: 1;
    box-shadow: 0 1px 2px rgba(0, 0, 0, 0.1);
}
.row-label {
    flex: 1;
    align-self: center;
    padding: 0 0 2px 12px;
}
.menu-item {
    display: flex;
    align-items: center;
    justify-content: space-between;
    width: 100%;
    height: 52px;
    padding: 0 10px 2px;
    border-radius: 6px;
}
.menu-item.hover {
    background: #dddddd;
}
.menu-item input {
    appearance: none;
    width: 32px;
    height: 32px;
    margin: 0;
    border-radius: 5px;
    background: #924d8b;
    box-shadow: 0 1px 1px rgba(0, 0, 0, 0.1);
}
.menu-item.hover input {
    background: #a85aa0;
}
.menu-item input:checked::before {
    content: "";
    display: block;
    width: 32px;
    height: 32px;
    background: #fff;
    clip-path: polygon(4px 15px, 7px 12px, 13px 18px, 26px 8px, 28px 10px, 14px 25px);
}

/* places */
.content {
    flex: 1;
    min-height: 0;
    display: flex;
}
.sidebar {
    width: 378px;
    flex: none;
    display: flex;
    flex-direction: column;
    gap: 4px;
    padding-top: 8px;
    background: #f7f7f7;
    border-right: 2px solid #d5d5d5;
}
.sidebar a {
    display: flex;
    align-items: center;
    gap: 16px;
    height: 72px;
    padding: 0 0 2px 28px;
}
.sidebar .icon {
    color: #474747;
}
.sidebar .selected {
    color: #fff;
    background: #e95420;
}
.sidebar .selected .icon {
    color: #f8cbbb;
}
.sidebar hr {
    width: 100%;
    margin: 6px 0;
    border: none;
    border-top: 2px solid #dadada;
}

/* file list */
.files {
    flex: 1;
    min-width: 0;
    overflow: hidden;
    background: #fff;
    border-bottom: 3px solid #dcdcdc;
}
table {
    width: 100%;
    table-layout: fixed;
    border-collapse: separate;
    border-spacing: 0;
}
th {
    height: 50px;
    padding: 0 14px 0 10px;
    font-size: 28px;
    color: #9c9c9c;
    text-align: left;
    border-right: 2px solid #e1e1e1;
    border-bottom: 2px solid #e1e1e1;
}
.th-name {
    display: flex;
    align-items: center;
    justify-content: space-between;
    padding-right: 4px;
}
.col-size {
    width: 154px;
}
.col-modified {
    width: 172px;
    text-align: right;
}
.col-star {
    width: 102px;
    border-right: none;
}
td {
    height: 92px;
    padding: 0;
    border-bottom: 2px solid #f0f0f0;
}
.file {
    display: flex;
    align-items: center;
    gap: 9px;
    padding-left: 28px;
    white-space: nowrap;
}
.file-icon {
    width: 64px;
    height: 64px;
    flex: none;
}
.size,
.modified {
    font-size: 28px;
    color: #868686;
    white-space: nowrap;
}
.size {
    padding-left: 14px;
}
.modified {
    padding-right: 14px;
    text-align: right;
}
.star button {
    margin: 0 auto;
}
```
